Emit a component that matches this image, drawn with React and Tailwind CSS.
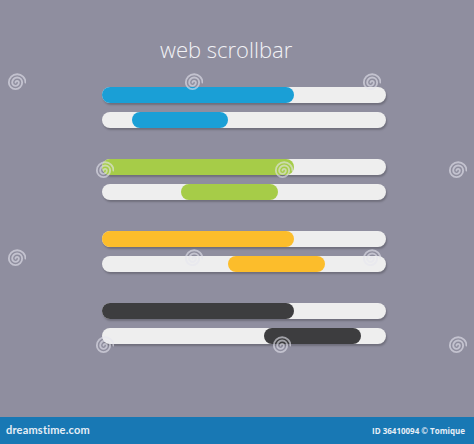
import React from "react";

const bars = [
  { color: "bg-[#1a9fd6]", thumbLeft: "ml-[30px]", thumbWidth: "w-[96px]" },
  { color: "bg-[#a6cc48]", thumbLeft: "ml-[79px]", thumbWidth: "w-[97px]" },
  { color: "bg-[#fcbd2b]", thumbLeft: "ml-[126px]", thumbWidth: "w-[97px]" },
  { color: "bg-[#3d3d3f]", thumbLeft: "ml-[162px]", thumbWidth: "w-[97px]" },
];

// watermark spirals scattered over the canvas
const spirals = [
  [5, 72], [182, 72], [360, 72],
  [93, 160], [272, 160], [446, 160],
  [5, 248], [182, 248], [360, 248],
  [93, 335], [270, 335], [446, 335],
];

const Spiral = ({ x, y }) => (
  <svg
    className="absolute opacity-60"
    style={{ left: x, top: y }}
    width="21"
    height="21"
    viewBox="0 0 19 19"
    fill="none"
    stroke="#e6e6ef"
    strokeWidth="1.7"
    strokeLinecap="round"
  >
    <path d="M9.5 9.5 a1.5 1.5 0 0 1 3 0 a3 3 0 0 1 -6 0 a4.5 4.5 0 0 1 9 0 a6 6 0 0 1 -12 0 a7.5 7.5 0 0 1 15 0" />
  </svg>
);

const Track = ({ children }) => (
  <div className="h-4 w-[284px] rounded-full bg-[#eeeeee] shadow-[1px_2px_2px_rgba(0,0,0,0.22)] flex">
    {children}
  </div>
);

export default function App() {
  return (
    <div className="w-[474px] h-[444px] flex flex-col overflow-hidden" style={{ fontFamily: "'Open Sans', sans-serif" }}>
      <div className="relative flex-1 bg-[#8f8e9f] flex flex-col">
        <h1 className="ml-[160px] mt-[38px] text-[22px] font-light leading-[22px] text-[#f2f2f6]">
          web scrollbar
        </h1>

        <div className="ml-[102px] mt-[27px] flex flex-col gap-[31px]">
          {bars.map((b, i) => (
            <div key={i} className="flex flex-col gap-[9px]">
              <Track>
                <div className={`h-full w-[192px] rounded-full ${b.color}`} />
              </Track>
              <Track>
                <div className={`h-full rounded-full ${b.color} ${b.thumbLeft} ${b.thumbWidth}`} />
              </Track>
            </div>
          ))}
        </div>

        {spirals.map(([x, y], i) => (
          <Spiral key={i} x={x} y={y} />
        ))}
      </div>

      <div className="h-[27px] bg-[#1878b4] flex items-center justify-between pl-[6px] pr-[9px]">
        <span className="text-[11px] font-bold text-[#e6eef6] tracking-[0.2px]" style={{ fontFamily: "Lato, sans-serif" }}>
          dreamstime.com
        </span>
        <span className="text-[8px] font-bold text-[#e6eef6]" style={{ fontFamily: "'Open Sans', sans-serif" }}>
          ID 36410094 © Tomique
        </span>
      </div>
    </div>
  );
}
